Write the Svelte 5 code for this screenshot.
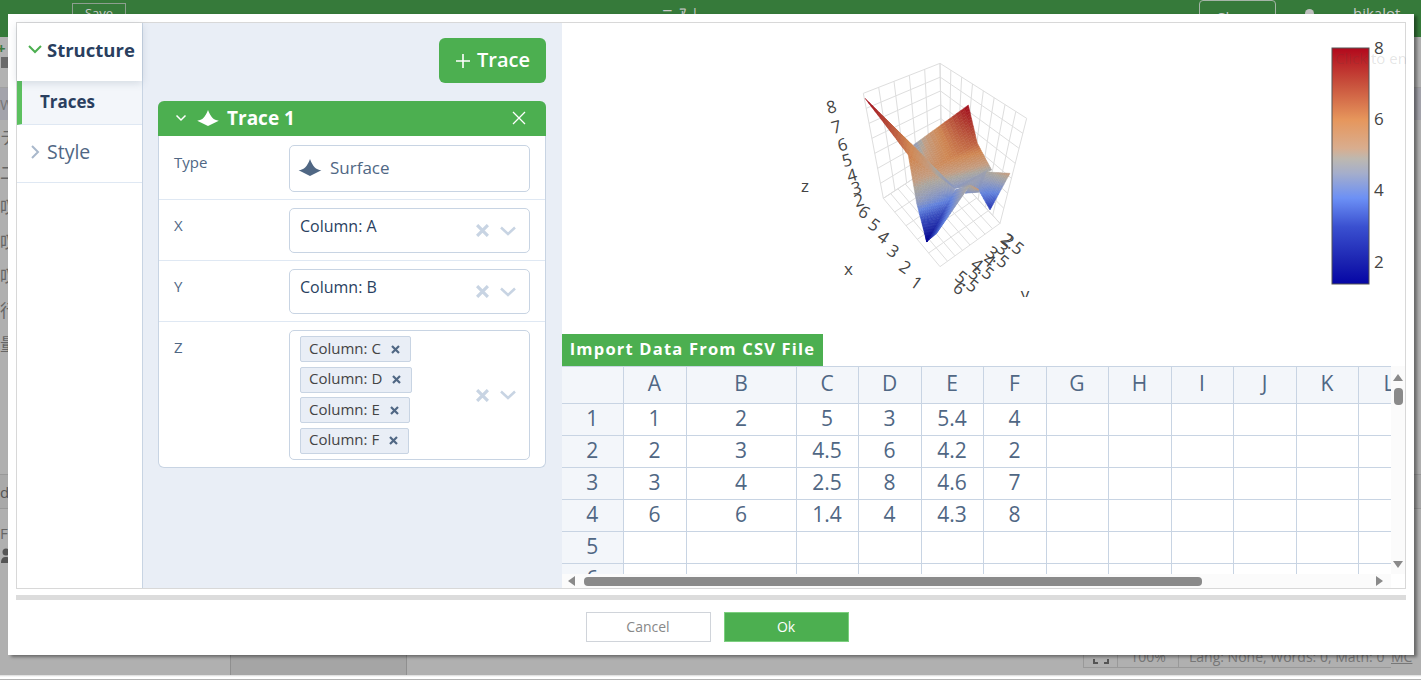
<script>
  const colors = [
    [1.4, [5, 5, 165]],
    [2, [26, 34, 176]],
    [3, [58, 80, 208]],
    [3.8, [108, 144, 245]],
    [4.5, [165, 174, 203]],
    [4.9, [189, 184, 176]],
    [5.2, [217, 173, 142]],
    [6, [230, 150, 92]],
    [7, [200, 80, 60]],
    [8, [178, 8, 28]]
  ]

  function colorAt(z) {
    const shade = 0.9
    for (let i = 1; i < colors.length; i++) {
      if (z <= colors[i][0]) {
        const [a, ca] = colors[i - 1]
        const [b, cb] = colors[i]
        const t = Math.max(0, (z - a) / (b - a))
        return `rgb(${ca.map((c, k) => Math.round((c + (cb[k] - c) * t) * shade)).join(',')})`
      }
    }
    return 'rgb(160,8,25)'
  }

  // surface pieces, corners are [x, y, z] in a 3x crop of the plot
  const patches = [
    [[430, 255, 4.4], [595, 135, 8], [622, 250, 6.6], [480, 330, 5.6]],
    [[480, 330, 5.6], [622, 250, 6.6], [665, 330, 4.8], [555, 385, 4.3]],
    [[640, 335, 4.8], [720, 340, 5.3], [660, 450, 2.6], [625, 388, 4.2]],
    [[555, 385, 4.3], [650, 332, 4.7], [625, 390, 4.2], [600, 376, 5]],
    [[600, 375, 5], [625, 388, 5.4], [628, 396, 4.5], [585, 400, 4.2]],
    [[555, 390, 4.2], [600, 375, 5], [500, 520, 3.5], [470, 545, 1.4]],
    [[415, 285, 6.2], [555, 385, 4.5], [545, 412, 3.9], [440, 430, 4.4]],
    [[440, 430, 4.4], [545, 412, 3.9], [470, 545, 1.4], [470, 545, 1.4]],
    [[285, 115, 8], [430, 258, 5.8], [555, 385, 4.2], [415, 285, 6.2]]
  ]

  const px = (u) => 770 + u / 3
  const py = (v) => 60 + v / 3

  function lerp(a, b, t) {
    return a.map((v, i) => v + (b[i] - v) * t)
  }

  function meshOf(p, n) {
    const cells = []
    const at = (s, t) => lerp(lerp(p[0], p[1], s), lerp(p[3], p[2], s), t)
    for (let i = 0; i < n; i++) {
      for (let j = 0; j < n; j++) {
        const q = [at(i / n, j / n), at((i + 1) / n, j / n), at((i + 1) / n, (j + 1) / n), at(i / n, (j + 1) / n)]
        const z = (q[0][2] + q[1][2] + q[2][2] + q[3][2]) / 4
        cells.push({
          points: q.map((c) => `${px(c[0]).toFixed(1)},${py(c[1]).toFixed(1)}`).join(' '),
          color: colorAt(z)
        })
      }
    }
    return cells
  }

  const cells = patches.flatMap((p) => meshOf(p, 14))

  // the three walls of the scene box
  const walls = [
    { c: [[280, 100], [510, 10], [515, 300], [340, 415]], a: 5, b: 7 },
    { c: [[510, 10], [770, 175], [690, 490], [515, 300]], a: 8, b: 7 },
    { c: [[340, 415], [515, 300], [690, 490], [510, 620]], a: 8, b: 5 }
  ]

  function wallLines(w) {
    const lines = []
    const at = (s, t) => lerp(lerp(w.c[0], w.c[1], s), lerp(w.c[3], w.c[2], s), t)
    for (let i = 0; i <= w.a; i++) lines.push([at(i / w.a, 0), at(i / w.a, 1)])
    for (let j = 0; j <= w.b; j++) lines.push([at(0, j / w.b), at(1, j / w.b)])
    return lines
  }

  const gridLines = walls.flatMap(wallLines)

  const zTicks = [['8', 185, 145], ['7', 200, 205], ['6', 218, 258], ['5', 232, 305], ['4', 247, 350], ['3', 260, 388], ['2', 268, 425]]
  const xTicks = [['6', 280, 460], ['5', 310, 498], ['4', 338, 535], ['3', 367, 577], ['2', 403, 625], ['1', 437, 672]]
  const yTicks = [['6', 565, 688], ['5.5', 588, 668], ['5', 612, 645], ['4.5', 635, 630], ['4', 655, 605], ['3.5', 680, 595], ['3', 695, 570], ['2.5', 725, 555], ['2', 712, 545]]

  const cols = [
    ['A', 63], ['B', 110], ['C', 62], ['D', 63], ['E', 62], ['F', 63], ['G', 62], ['H', 63], ['I', 62], ['J', 63], ['K', 62], ['L', 62]
  ]
  const rows = [
    ['1', '2', '5', '3', '5.4', '4'],
    ['2', '3', '4.5', '6', '4.2', '2'],
    ['3', '4', '2.5', '8', '4.6', '7'],
    ['6', '6', '1.4', '4', '4.3', '8'],
    [],
    []
  ]
  const zColumns = ['C', 'D', 'E', 'F']
  const sideLines = ['テ', '二', '叹', '叹', '叹', '行', '量']
</script>

<div class="page">
  <header class="topbar">
    <span class="save">Save</span>
    <span class="title">ニ ｱ |</span>
    <span class="share">Share</span>
    <span class="dot"></span>
    <span class="user">hikalot</span>
  </header>
  <div class="tools">
    <span class="plus">+</span>
    <span class="square"></span>
  </div>
  <div class="wband">W</div>
  <div class="sidelist">
    {#each sideLines as line}
      <div>{line}</div>
    {/each}
  </div>
  <div class="dband">d</div>
  <div class="fe">Fe</div>
  <svg class="person" width="9" height="15" viewBox="0 0 9 15"><circle cx="5" cy="4" r="3.5" /><path d="M0 15c0-5 2-6 5-6s4 1 4 6z" /></svg>
  <div class="spacer"></div>
  <div class="status">
    <span class="tab"></span>
    <span class="stat full">
      <svg width="16" height="10" viewBox="0 0 16 10"><path d="M1 5v4h4M15 5v4h-4" /></svg>
    </span>
    <span class="stat zoomlevel">100%</span>
    <span class="stat wide">Lang: None, Words: 0, Math: 0</span>
    <span class="mo">MC</span>
  </div>
  <div class="strip"></div>
</div>

<div class="modal">
  <div class="frame">
    <nav class="side">
      <div class="group open">
        <svg width="14" height="10" viewBox="0 0 14 10"><path d="M1 2l6 6 6-6" /></svg>
        <span>Structure</span>
      </div>
      <div class="item">Traces</div>
      <div class="group">
        <svg width="10" height="14" viewBox="0 0 10 14"><path d="M2 1l6 6-6 6" /></svg>
        <span>Style</span>
      </div>
    </nav>

    <section class="middle">
      <div class="addrow">
        <button class="add">
          <svg width="16" height="16" viewBox="0 0 16 16"><path d="M8 1v14M1 8h14" /></svg>
          Trace
        </button>
      </div>
      <div class="card">
        <div class="cardhead">
          <svg class="chev" width="12" height="8" viewBox="0 0 12 8"><path d="M1.5 1.5l4.5 4.5 4.5-4.5" /></svg>
          <svg width="22" height="18" viewBox="0 0 24 20"><path class="mound" d="M0 13C6 12 9 9 12 1c3 8 6 11 12 12l-12 6z" /></svg>
          <span class="cardtitle">Trace 1</span>
          <svg class="close" width="14" height="14" viewBox="0 0 14 14"><path d="M1 1l12 12M13 1L1 13" /></svg>
        </div>

        <div class="row typerow">
          <label>Type</label>
          <div class="field typefield">
            <svg width="24" height="19" viewBox="0 0 24 20"><path class="mound dark" d="M0 13C6 12 9 9 12 1c3 8 6 11 12 12l-12 6z" /></svg>
            <span>Surface</span>
          </div>
        </div>

        {#each [['X', 'A'], ['Y', 'B']] as [axis, col]}
          <div class="row selrow">
            <label>{axis}</label>
            <div class="field select">
              <span class="value">Column: {col}</span>
              <span class="clear"><svg width="13" height="13" viewBox="0 0 12 12"><path d="M1 1l10 10M11 1L1 11" /></svg></span>
              <span class="drop"><svg width="16" height="10" viewBox="0 0 16 10"><path d="M1 1.5l7 6.5 7-6.5" /></svg></span>
            </div>
          </div>
        {/each}

        <div class="row zrow">
          <label>Z</label>
          <div class="field select multi">
            <div class="tags">
              {#each zColumns as col}
                <div class="tag">
                  <span>Column: {col}</span>
                  <svg width="9" height="9" viewBox="0 0 9 9"><path d="M1 1l7 7M8 1L1 8" /></svg>
                </div>
              {/each}
            </div>
            <span class="clear"><svg width="13" height="13" viewBox="0 0 12 12"><path d="M1 1l10 10M11 1L1 11" /></svg></span>
            <span class="drop"><svg width="16" height="10" viewBox="0 0 16 10"><path d="M1 1.5l7 6.5 7-6.5" /></svg></span>
          </div>
        </div>
      </div>
    </section>

    <section class="right">
      <svg class="plot" viewBox="562 23 844 274" width="844" height="274">
        <defs>
          <linearGradient id="bar" x1="0" y1="0" x2="0" y2="1">
            {#each [...colors].reverse() as [z, c]}
              <stop offset={(8 - z) / 6.6} stop-color="rgb({c.join(',')})" />
            {/each}
          </linearGradient>
        </defs>

        {#each gridLines as [a, b]}
          <line x1={px(a[0])} y1={py(a[1])} x2={px(b[0])} y2={py(b[1])} class="grid" />
        {/each}

        <g class="surface">
          {#each cells as cell}
            <polygon points={cell.points} fill={cell.color} stroke={cell.color} stroke-width="0.5" />
          {/each}
        </g>

        {#each zTicks as [t, u, v]}
          <text class="tick" x={px(u)} y={py(v)} transform="rotate(-15 {px(u)} {py(v)})">{t}</text>
        {/each}
        {#each xTicks as [t, u, v]}
          <text class="tick" x={px(u)} y={py(v)} transform="rotate(35 {px(u)} {py(v)})">{t}</text>
        {/each}
        {#each yTicks as [t, u, v]}
          <text class="tick" x={px(u)} y={py(v)} transform="rotate(38 {px(u)} {py(v)})">{t}</text>
        {/each}
        <text class="tick" x={px(105)} y={py(383)}>z</text>
        <text class="tick" x={px(235)} y={py(630)}>x</text>
        <text class="tick" x={px(765)} y={py(706)}>y</text>

        <rect x="1332" y="48" width="37" height="236" fill="url(#bar)" class="barrect" />
        <text class="hint" x="1335" y="64">Click to enter Colorscale title</text>
        <text class="bartick" x="1374" y="54">8</text>
        <text class="bartick" x="1374" y="125">6</text>
        <text class="bartick" x="1374" y="196">4</text>
        <text class="bartick" x="1374" y="268">2</text>
      </svg>

      <div class="importrow"><button class="import">Import Data From CSV File</button></div>

      <div class="sheet">
        <div class="tablewrap">
          <table>
            <colgroup>
              <col style="width: 61px" />
              {#each cols as [, w]}
                <col style="width: {w}px" />
              {/each}
            </colgroup>
            <thead>
              <tr>
                <th></th>
                {#each cols as [name]}
                  <th>{name}</th>
                {/each}
              </tr>
            </thead>
            <tbody>
              {#each rows as row, i}
                <tr>
                  <th>{i + 1}</th>
                  {#each cols as _, j}
                    <td>{row[j] ?? ''}</td>
                  {/each}
                </tr>
              {/each}
            </tbody>
          </table>
        </div>
        <div class="vbar">
          <span class="up"></span>
          <span class="vthumb"></span>
          <span class="down"></span>
        </div>
        <div class="hbar">
          <span class="left"></span>
          <span class="hthumb"></span>
          <span class="rightarrow"></span>
        </div>
      </div>
    </section>
  </div>

  <div class="divider"></div>
  <div class="actions">
    <button class="cancel">Cancel</button>
    <button class="ok">Ok</button>
  </div>
</div>

<style>
  :global(body) {
    margin: 0;
    overflow: hidden;
    background: #b0b0b0;
    font-family: 'Open Sans', sans-serif;
  }

  .page {
    height: 680px;
    display: flex;
    flex-direction: column;
    color: #555;
    font-size: 15px;
    overflow: hidden;
  }
  .topbar {
    height: 37px;
    flex: none;
    background: #367a3a;
    display: flex;
    color: #c9c9c9;
    position: relative;
  }
  .save {
    margin: 3px 0 0 72px;
    width: 54px;
    height: 30px;
    border: 1px solid #8d9f8f;
    box-sizing: border-box;
    font-size: 13px;
    text-align: center;
  }
  .title {
    margin: 3px 0 0 534px;
    width: 539px;
    flex: none;
  }
  .share {
    width: 77px;
    height: 30px;
    flex: none;
    border: 1px solid #a5b5a7;
    border-radius: 4px;
    box-sizing: border-box;
    text-align: center;
    padding-top: 6px;
  }
  .dot {
    width: 9px;
    height: 9px;
    flex: none;
    border-radius: 50%;
    background: #c0c0c0;
    margin: 9px 0 0 29px;
  }
  .user {
    margin: 3px 0 0 39px;
  }
  .tools {
    height: 51px;
    flex: none;
    display: flex;
    align-items: flex-start;
    border-bottom: 1px solid #a0a0a0;
    box-sizing: border-box;
    background: #b2b2b2;
  }
  .plus {
    color: #3d7a3f;
    font-weight: 700;
    font-size: 15px;
    line-height: 22px;
    margin-left: -3px;
    width: 4px;
  }
  .square {
    width: 8px;
    height: 11px;
    background: #6a6a6a;
    margin-top: 20px;
  }
  .wband {
    height: 32px;
    flex: none;
    background: #a3a3ab;
    font-size: 15px;
    line-height: 32px;
    color: #777;
  }
  .sidelist {
    height: 354px;
    flex: none;
    font-family: 'Noto Sans CJK JP', sans-serif;
    font-size: 17px;
    color: #666;
    box-sizing: border-box;
  }
  .sidelist div {
    height: 34.5px;
    line-height: 34.5px;
  }
  .dband {
    height: 35px;
    flex: none;
    font-size: 15px;
    line-height: 35px;
    border-top: 1px solid #999;
    border-bottom: 1px solid #999;
    background: #a9a9a9;
    box-sizing: border-box;
    color: #555;
  }
  .fe {
    margin-top: 12px;
    font-size: 15px;
    line-height: 24px;
    color: #666;
  }
  .person {
    fill: #555;
    flex: none;
    margin: 3px 0 0 1px;
  }
  .spacer {
    flex: 1;
  }
  .status {
    height: 30px;
    flex: none;
    display: flex;
    font-size: 14px;
    color: #777;
    background: #b0b0b0;
    padding-left: 230px;
  }
  .tab {
    width: 177px;
    flex: none;
    background: #a5a5a5;
    border-left: 1px solid #8f8f8f;
    border-right: 1px solid #8f8f8f;
    margin-right: 676px;
    box-sizing: border-box;
  }
  .stat {
    height: 23px;
    flex: none;
    line-height: 23px;
    border-right: 1px solid #999;
    border-bottom: 1px solid #999;
    box-sizing: border-box;
    text-align: center;
    white-space: nowrap;
  }
  .full {
    width: 35px;
    border-left: 1px solid #999;
  }
  .full svg {
    fill: none;
    stroke: #555;
    stroke-width: 2;
    margin-top: 9px;
  }
  .zoomlevel {
    width: 61px;
  }
  .wide {
    width: 212px;
    text-align: left;
    padding-left: 10px;
    border-right: 0;
  }
  .mo {
    line-height: 23px;
    text-decoration: underline;
  }
  .strip {
    height: 5px;
    flex: none;
    background: linear-gradient(#d8d8d8, #fff 40%, #fff 80%, #666);
  }

  .modal {
    position: absolute;
    left: 8px;
    top: 14px;
    width: 1406px;
    height: 641px;
    background: #fff;
    box-shadow: 3px 2px 3px rgba(0, 0, 0, 0.4);
    padding: 8px 8px 0;
    box-sizing: border-box;
    display: flex;
    flex-direction: column;
  }
  .frame {
    height: 567px;
    flex: none;
    display: flex;
    border: 1px solid #d8d8d8;
    box-sizing: border-box;
  }

  .side {
    width: 125px;
    flex: none;
    border-right: 1px solid #c8d4e3;
    color: #2a3f5f;
  }
  .group {
    height: 58px;
    display: flex;
    align-items: center;
    padding: 0 0 4px 13px;
    gap: 7px;
    border-bottom: 1px solid #dfe8f3;
    box-sizing: border-box;
    color: #506784;
    font-size: 19.5px;
  }
  .group.open {
    padding: 0 0 6px 11px;
    gap: 5px;
    font-size: 18.5px;
    font-weight: 700;
    color: #2a3f5f;
    border-bottom: 0;
    box-shadow: 0 2px 8px rgba(80, 103, 132, 0.2);
    position: relative;
  }
  .group svg {
    fill: none;
    stroke: #a9b8cb;
    stroke-width: 2;
    flex: none;
  }
  .group.open svg {
    stroke: #4caf50;
  }
  .item {
    height: 44px;
    line-height: 42px;
    box-sizing: border-box;
    border-left: 5px solid #5cc05f;
    background: #f3f6fa;
    border-bottom: 1px solid #dfe8f3;
    padding-left: 18px;
    font-weight: 700;
    font-size: 17px;
  }

  .middle {
    width: 419px;
    flex: none;
    background: #e9eef6;
    padding: 15px 15px 0;
    box-sizing: border-box;
  }
  .addrow {
    display: flex;
    justify-content: flex-end;
    height: 63px;
    margin-right: 1px;
  }
  button {
    font-family: inherit;
    cursor: pointer;
  }
  .add {
    width: 107px;
    height: 45px;
    border: 0;
    border-radius: 6px;
    background: #4caf50;
    color: #fff;
    font-weight: 600;
    font-size: 20px;
    display: flex;
    align-items: center;
    justify-content: center;
    gap: 6px;
    padding: 0 0 2px;
  }
  .add svg {
    stroke: #fff;
    stroke-width: 1.6;
    fill: none;
    margin-top: 2px;
  }
  .card {
    width: 388px;
    background: #fff;
    border: 1px solid #c8d4e3;
    border-top: 0;
    border-radius: 6px;
    box-sizing: border-box;
  }
  .cardhead {
    height: 35px;
    margin: 0 -1px;
    background: #4caf50;
    border-radius: 6px 6px 0 0;
    display: flex;
    align-items: center;
    padding: 0 20px 2px 17px;
    box-sizing: border-box;
    color: #fff;
    font-weight: 700;
    font-size: 19px;
  }
  .chev {
    fill: none;
    stroke: #fff;
    stroke-width: 1.5;
    margin-right: 10px;
  }
  .mound {
    fill: #fff;
  }
  .mound.dark {
    fill: #506784;
  }
  .cardtitle {
    flex: 1;
    margin-left: 8px;
  }
  .close {
    fill: none;
    stroke: #fff;
    stroke-width: 1.3;
  }
  .row {
    display: flex;
    border-bottom: 1px solid #dfe8f3;
    padding: 9px 15px 0 15px;
    box-sizing: border-box;
  }
  .row label {
    width: 115px;
    flex: none;
    color: #506784;
    font-size: 15px;
    line-height: 20px;
    padding-top: 7px;
  }
  .typerow {
    height: 64px;
  }
  .selrow {
    height: 61px;
    padding-top: 8px;
  }
  .zrow {
    border-bottom: 0;
    height: 145px;
    padding-top: 8px;
  }
  .field {
    width: 241px;
    border: 1px solid #c8d4e3;
    border-radius: 5px;
    box-sizing: border-box;
    color: #506784;
    font-size: 17px;
  }
  .typefield {
    height: 47px;
    display: flex;
    align-items: center;
    gap: 8px;
    padding: 0 0 3px 8px;
  }
  .select {
    height: 45px;
    display: flex;
    align-items: center;
    color: #2a3f5f;
    font-size: 16px;
    padding-left: 10px;
  }
  .value {
    flex: 1;
    align-self: flex-start;
    margin-top: 7px;
    line-height: 20px;
  }
  .clear svg {
    display: block;
    fill: none;
    stroke: #c8d4e3;
    stroke-width: 3;
    margin-right: 11px;
  }
  .drop svg {
    display: block;
    fill: none;
    stroke: #c8d4e3;
    stroke-width: 2.5;
    margin-right: 13px;
  }
  .multi {
    height: 130px;
  }
  .tags {
    flex: 1;
    display: flex;
    flex-direction: column;
    align-items: flex-start;
    gap: 4.6px;
  }
  .tag {
    height: 26px;
    display: flex;
    align-items: center;
    gap: 10px;
    padding: 0 10px 3px 8px;
    background: #e9eef6;
    border: 1px solid #c8d4e3;
    border-radius: 2px;
    box-sizing: border-box;
    color: #444;
    font-size: 15px;
  }
  .tag svg {
    fill: none;
    stroke: #506784;
    stroke-width: 2.2;
    margin-top: 3px;
  }

  .right {
    flex: 1;
    min-width: 0;
    display: flex;
    flex-direction: column;
  }
  .plot {
    display: block;
    flex: none;
  }
  .grid {
    stroke: #dedede;
    stroke-width: 1;
  }
  .surface {
    filter: blur(0.5px);
  }
  .tick {
    font-size: 17px;
    fill: #444;
    text-anchor: middle;
    dominant-baseline: middle;
  }
  .hint {
    font-size: 15px;
    fill: #444;
    fill-opacity: 0.15;
  }
  .barrect {
    stroke: #555;
    stroke-width: 1;
  }
  .bartick {
    font-size: 17px;
    fill: #444;
  }
  .importrow {
    height: 32px;
    margin-top: 37px;
    flex: none;
  }
  .import {
    height: 32px;
    width: 261px;
    border: 0;
    background: #4caf50;
    color: #fff;
    font-weight: 700;
    font-size: 16.5px;
    letter-spacing: 1.2px;
    padding: 0 0 4px;
    white-space: nowrap;
  }
  .sheet {
    height: 222px;
    flex: none;
    display: grid;
    grid-template-columns: 829px 14px;
    grid-template-rows: 208px 14px;
  }
  .tablewrap {
    overflow: hidden;
  }
  table {
    border-collapse: collapse;
    table-layout: fixed;
    width: 838px;
    color: #506784;
    font-size: 21px;
    text-align: center;
  }
  th,
  td {
    border: 1px solid #c8d4e3;
    padding: 0 0 3px;
    font-weight: 400;
    height: 28px;
    line-height: 28px;
    box-sizing: content-box;
    overflow: hidden;
  }
  thead th {
    height: 33px;
    line-height: 33px;
    background: #f3f6fa;
  }
  thead tr th:first-child,
  tbody th {
    border-left: 0;
  }
  tbody th {
    background: #f3f6fa;
  }
  .vbar {
    background: #fbfbfb;
    display: flex;
    flex-direction: column;
    align-items: center;
  }
  .up {
    margin-top: 8px;
    border: 5px solid transparent;
    border-top: 0;
    border-bottom: 7px solid #8a8a8a;
  }
  .vthumb {
    width: 9px;
    height: 17px;
    margin-top: 7px;
    background: #8a8a8a;
    border-radius: 4px;
  }
  .down {
    margin-top: auto;
    margin-bottom: 6px;
    border: 5px solid transparent;
    border-bottom: 0;
    border-top: 7px solid #8a8a8a;
  }
  .hbar {
    background: #fbfbfb;
    display: flex;
    align-items: center;
  }
  .left {
    margin-left: 6px;
    border: 5px solid transparent;
    border-left: 0;
    border-right: 7px solid #8a8a8a;
  }
  .hthumb {
    width: 618px;
    height: 9px;
    margin-left: 9px;
    background: #8a8a8a;
    border-radius: 4px;
  }
  .rightarrow {
    margin-left: auto;
    margin-right: 8px;
    border: 5px solid transparent;
    border-right: 0;
    border-left: 7px solid #8a8a8a;
  }

  .divider {
    height: 5px;
    margin-top: 6px;
    background: #dcdcdc;
    flex: none;
  }
  .actions {
    display: flex;
    justify-content: center;
    gap: 13px;
    margin-top: 12px;
    padding-left: 12px;
  }
  .actions button {
    width: 125px;
    height: 30px;
    font-size: 14px;
    padding: 0 0 2px;
    box-sizing: border-box;
  }
  .cancel {
    background: #fff;
    border: 1px solid #d0d4da;
    color: #888;
  }
  .ok {
    background: #4caf50;
    border: 1px solid #7ccf7f;
    color: #fff;
  }
</style>
